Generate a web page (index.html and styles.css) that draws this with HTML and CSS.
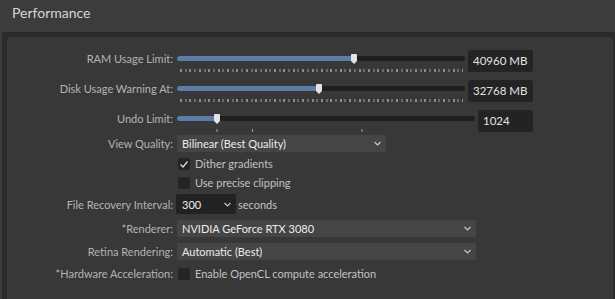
FILE: index.html
```html
<!DOCTYPE html>
<html>
<head>
    <title>Performance</title>
    <link rel="stylesheet" href="styles.css">
</head>
<body>
    <div class="title">Performance</div>

    <div class="frame">
        <div class="panel">
            <div class="row slider-row">
                <div class="label">RAM Usage Limit:</div>
                <div class="slider">
                    <div class="track">
                        <div class="fill" style="width: 177px"></div>
                        <div class="thumb" style="left: 174px"></div>
                    </div>
                    <div class="ticks"></div>
                </div>
                <div class="value">40960 MB</div>
            </div>

            <div class="row slider-row">
                <div class="label">Disk Usage Warning At:</div>
                <div class="slider">
                    <div class="track">
                        <div class="fill" style="width: 142px"></div>
                        <div class="thumb" style="left: 139px"></div>
                    </div>
                    <div class="ticks"></div>
                </div>
                <div class="value">32768 MB</div>
            </div>

            <div class="row slider-row">
                <div class="label">Undo Limit:</div>
                <div class="slider wide">
                    <div class="track">
                        <div class="fill" style="width: 40px"></div>
                        <div class="thumb" style="left: 37px"></div>
                    </div>
                    <div class="marks">
                        <span class="mark" style="left: 39px"></span>
                        <span class="mark light" style="left: 75px"></span>
                        <span class="mark" style="left: 184px"></span>
                    </div>
                </div>
                <div class="value narrow">1024</div>
            </div>

            <div class="row quality-row">
                <div class="label">View Quality:</div>
                <div class="select quality">
                    <span>Bilinear (Best Quality)</span>
                    <svg class="chev" width="7" height="5" viewBox="0 0 7 5"><polyline points="0.5,1 3.5,4 6.5,1" /></svg>
                </div>
            </div>

            <div class="row check-row">
                <div class="label"></div>
                <div class="check on">
                    <svg width="12" height="12" viewBox="0 0 12 12"><polyline points="2.5,6.5 5,9 9.5,3.5" /></svg>
                </div>
                <div class="check-text">Dither gradients</div>
            </div>

            <div class="row check-row">
                <div class="label"></div>
                <div class="check"></div>
                <div class="check-text">Use precise clipping</div>
            </div>

            <div class="row recovery-row">
                <div class="label">File Recovery Interval:</div>
                <div class="select dark">
                    <span>300</span>
                    <svg class="chev" width="7" height="5" viewBox="0 0 7 5"><polyline points="0.5,1 3.5,4 6.5,1" /></svg>
                </div>
                <div class="unit">seconds</div>
            </div>

            <div class="row renderer-row">
                <div class="label">*Renderer:</div>
                <div class="select long">
                    <span>NVIDIA GeForce RTX 3080</span>
                    <svg class="chev" width="7" height="5" viewBox="0 0 7 5"><polyline points="0.5,1 3.5,4 6.5,1" /></svg>
                </div>
            </div>

            <div class="row retina-row">
                <div class="label">Retina Rendering:</div>
                <div class="select long">
                    <span>Automatic (Best)</span>
                    <svg class="chev" width="7" height="5" viewBox="0 0 7 5"><polyline points="0.5,1 3.5,4 6.5,1" /></svg>
                </div>
            </div>

            <div class="row check-row hw-row">
                <div class="label">*Hardware Acceleration:</div>
                <div class="check"></div>
                <div class="check-text">Enable OpenCL compute acceleration</div>
            </div>
        </div>
    </div>
</body>
</html>
```

FILE: styles.css
```css
body {
    margin: 0;
    background: #3c3c3c;
    color: #b4b4b4;
    font-family: Lato, 'Noto Sans', sans-serif;
    font-size: 11px;
    height: 299px;
    overflow: hidden;
}
.title {
    height: 32px;
    line-height: 26px;
    padding-left: 12px;
    font-size: 14px;
    color: #d6d6d6;
}
.frame {
    margin-left: 2px;
    background: #2b2b2b;
    padding: 5px 2px 0 5px;
    height: 262px;
}
.panel {
    background: #383838;
    border-radius: 4px 4px 0 0;
    height: 100%;
    padding-top: 13px;
    box-sizing: border-box;
}
.row {
    display: flex;
    align-items: center;
}
.label {
    width: 166px;
    flex: none;
    text-align: right;
    margin-right: 4px;
    white-space: nowrap;
}
/* sliders */
.slider-row {
    align-items: flex-start;
    height: 22px;
    margin-bottom: 8px;
}
.slider-row .label {
    line-height: 14px;
    padding-top: 2px;
}
.slider {
    width: 288px;
    padding-top: 6px;
    position: relative;
}
.slider.wide {
    width: 298px;
}
.track {
    height: 5px;
    background: #1f1f1f;
    border-radius: 3px;
    position: relative;
}
.fill {
    height: 5px;
    background: #5b7ea8;
    border-radius: 3px 0 0 3px;
}
.thumb {
    position: absolute;
    top: -2px;
    width: 6px;
    height: 7px;
    background: #e4e4e4;
    border-radius: 1px 1px 0 0;
}
.thumb:after {
    content: '';
    position: absolute;
    top: 7px;
    left: 0;
    border-left: 3px solid transparent;
    border-right: 3px solid transparent;
    border-top: 3px solid #e4e4e4;
}
.ticks {
    margin: 8px 2px 0 3px;
    height: 3px;
    background: repeating-linear-gradient(90deg, #8c8c8c 0 2px, transparent 2px 4.7px, #6c6c6c 4.7px 6.7px, transparent 6.7px 9.4px);
}
.marks {
    position: relative;
    height: 3px;
    margin-top: 8px;
}
.mark {
    position: absolute;
    top: 0;
    width: 2px;
    height: 3px;
    background: #6c6c6c;
}
.mark.light {
    width: 1px;
    background: #a0a0a0;
}
.value {
    margin-left: 3px;
    width: 65px;
    height: 22px;
    box-sizing: border-box;
    padding-left: 5px;
    line-height: 22px;
    background: #232323;
    border-radius: 3px;
    color: #e2e2e2;
    font-size: 11.5px;
}
.value.narrow {
    width: 55px;
}
/* dropdowns */
.select {
    display: flex;
    align-items: center;
    justify-content: space-between;
    box-sizing: border-box;
    height: 17px;
    padding: 0 5px 0 5px;
    background: #454545;
    border-radius: 2px;
    color: #ececec;
}
.select.quality {
    width: 209px;
}
.select.long {
    width: 299px;
}
.select.dark {
    width: 60px;
    height: 20px;
    background: #222222;
    padding: 0 5px 0 6px;
}
.chev polyline {
    fill: none;
    stroke: #c8c8c8;
    stroke-width: 1.2;
}
.quality-row {
    height: 17px;
    margin-top: -5px;
}
.check-row {
    height: 19px;
}
.quality-row + .check-row {
    margin-top: 2px;
}
.check {
    width: 12px;
    height: 12px;
    background: #242424;
    border-radius: 2px;
    margin-left: 1px;
}
.check polyline {
    fill: none;
    stroke: #dcdcdc;
    stroke-width: 1.3;
}
.check-text {
    margin-left: 5px;
    color: #c2c2c2;
}
.recovery-row {
    height: 20px;
    margin-top: 2px;
}
.unit {
    margin-left: 2px;
    color: #c2c2c2;
}
.recovery-row .label {
    margin-right: 3px;
}
.renderer-row {
    height: 17px;
    margin-top: 6px;
}
.retina-row {
    height: 17px;
    margin-top: 6px;
}
.hw-row {
    margin-top: 4px;
}
```
